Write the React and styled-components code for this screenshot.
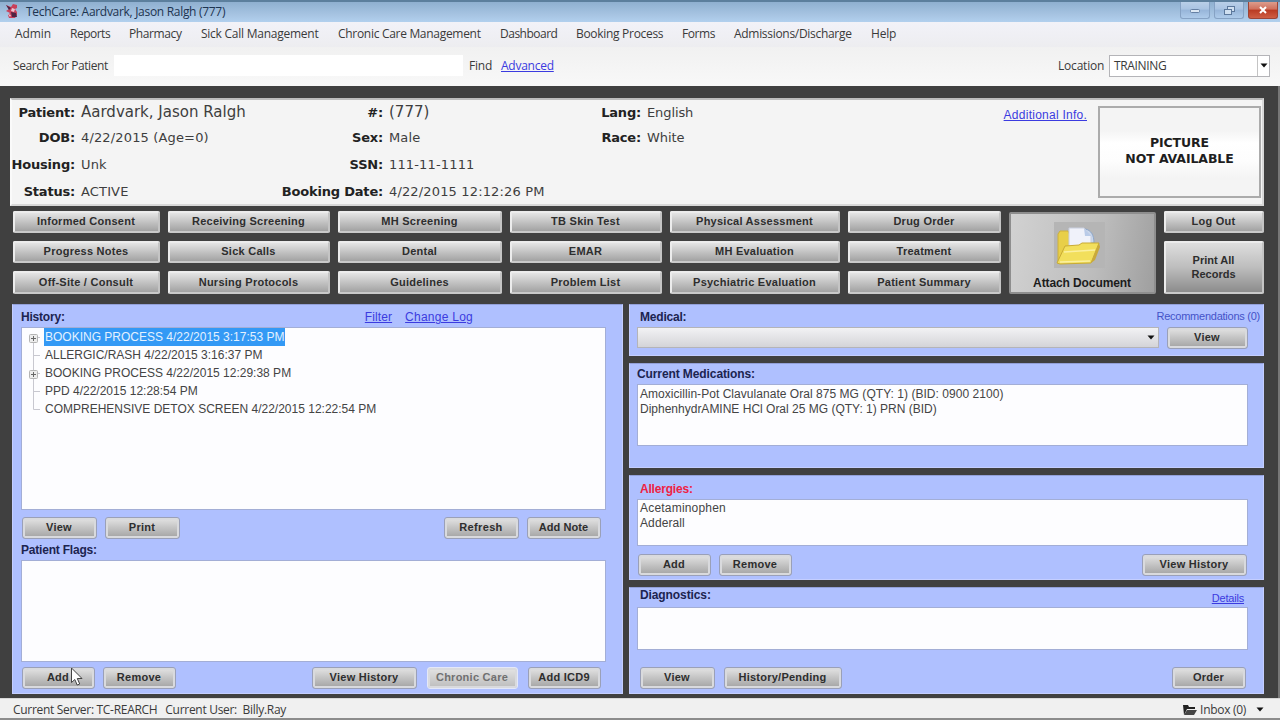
import React from 'react';
import styled, { createGlobalStyle } from 'styled-components';

const GlobalStyle = createGlobalStyle`
    body {
        margin: 0;
        background: #404040;
        overflow: hidden;
    }
    * {
        box-sizing: border-box;
    }
`;

const Window = styled.div`
    width: 1280px;
    height: 720px;
    display: flex;
    flex-direction: column;
    background: #404040;
    font-family: "Liberation Sans", Arial, sans-serif;
    font-size: 12px;
    color: #3a3a3a;
    white-space: nowrap;
`;

const TitleBar = styled.header`
    height: 22px;
    display: flex;
    align-items: center;
    padding: 0 2px 2px 4px;
    border-top: 2px solid #5c7f9d;
    background: linear-gradient(#8fb0d0, #a9c6e4 70%, #b2d0ee);
    font-family: "Open Sans", sans-serif;
`;

const Title = styled.span`
    flex: 1;
    padding-left: 6px;
    font-size: 12px;
    letter-spacing: -0.3px;
    color: #1d3450;
`;

const WindowButtons = styled.div`
    display: flex;
    align-self: flex-start;
    gap: 4px;
`;

const WindowButton = styled.div`
    width: 30px;
    height: 17px;
    display: flex;
    align-items: center;
    justify-content: center;
    border: 1px solid ${({ $close }) => ($close ? '#9c4436' : '#86a2c4')};
    border-top: none;
    border-radius: 0 0 3px 3px;
    background: ${({ $close }) => ($close
        ? 'linear-gradient(#dc9c8c, #cf6f5c 45%, #b93a22 50%, #cf5e44)'
        : 'linear-gradient(#b9cfe8, #a9c3e2 45%, #97b5d9 50%, #aecbea)')};
`;

const MenuBar = styled.nav`
    height: 25px;
    display: grid;
    grid-template-columns: 55px 59px 72px 137px 162px 76px 106px 52px 137px 1fr;
    align-items: center;
    padding: 0 0 2px 15px;
    background: linear-gradient(#f2f2f8, #ededf0);
    font-family: "Open Sans", sans-serif;
    font-size: 12px;
`;

const MenuItem = styled.span`
    letter-spacing: ${({ $spacing }) => $spacing || 0}px;
`;

const SearchRow = styled.div`
    height: 39px;
    display: flex;
    align-items: center;
    padding: 0 10px 2px 13px;
    background: linear-gradient(#f1f1f1, #f8f8f8);
    font-family: "Open Sans", sans-serif;
    letter-spacing: -0.2px;
`;

const SearchLabel = styled.label`
    width: ${({ $width }) => $width}px;
    letter-spacing: ${({ $spacing }) => $spacing || -0.2}px;
`;

const SearchInput = styled.div`
    width: 349px;
    height: 21px;
    margin-right: 6px;
    background: #fff;
`;

const Link = styled.a`
    color: #3b3be0;
    text-decoration: underline;
    font-size: ${({ $size }) => $size || 12}px;
    letter-spacing: ${({ $spacing }) => $spacing || 0}px;
`;

const Spacer = styled.div`
    flex: 1;
`;

const Combo = styled.div`
    width: ${({ $width }) => $width}px;
    height: ${({ $height }) => $height || 22}px;
    display: flex;
    align-items: stretch;
    border: 1px solid #b4b4b8;
    background: ${({ $shaded }) => ($shaded ? 'linear-gradient(#f2f2f4, #d4d4d8)' : '#fff')};
`;

const ComboText = styled.span`
    flex: 1;
    padding-left: 4px;
    line-height: 20px;
    letter-spacing: -0.35px;
`;

const ComboArrow = styled.span`
    width: ${({ $width }) => $width || 12}px;
    display: flex;
    align-items: center;
    justify-content: center;
    border-left: 1px solid ${({ $plain }) => ($plain ? 'transparent' : '#c4c4c4')};
`;

const Workspace = styled.main`
    height: 612px;
    padding: 12px 14px 0 10px;
    border-right: 2px solid #777;
    background: #404040;
`;

const PatientCard = styled.section`
    height: 108px;
    display: flex;
    border: 2px solid #d8d8d8;
    border-top-color: #bdbdbd;
    border-left-color: #fafafa;
    background: #f4f4f4;
    font-family: "DejaVu Sans", Verdana, sans-serif;
    font-size: 13px;
`;

const PatientGrid = styled.div`
    display: grid;
    grid-template-columns: 63px 245px 63px 189px 69px 446px;
    grid-template-rows: 24px 26px 28px 26px;
    align-items: center;
`;

const FieldLabel = styled.b`
    justify-self: end;
    color: #222;
    font-size: 13px;
    letter-spacing: -0.2px;
`;

const FieldValue = styled.span`
    padding-left: 6px;
    font-size: ${({ $large }) => ($large ? 15 : 13)}px;
    letter-spacing: ${({ $large, $spacing }) => ($large ? 0 : $spacing ?? 0.2)}px;
    color: #3e3e3e;
`;

const InfoLink = styled.div`
    grid-column: 6;
    grid-row: 1;
    justify-self: end;
    padding-top: 5px;
    font-family: "Liberation Sans", sans-serif;
`;

const Photo = styled.div`
    width: 163px;
    height: 92px;
    margin: 6px 1px 0 auto;
    padding-bottom: 2px;
    display: flex;
    align-items: center;
    justify-content: center;
    border: 2px solid #ababab;
    background: linear-gradient(#f4f4f4 25%, #fff 40%, #fdfdfd 60%, #f4f4f4 80%);
    color: #1e1e1e;
    font-weight: bold;
    font-size: 12.5px;
    line-height: 16px;
    text-align: center;
    letter-spacing: -0.1px;
`;

const ActionBar = styled.div`
    display: grid;
    grid-template-columns: 147px 162px 164px 152px 170px 153px 147px 100px;
    grid-template-rows: 22px 22px 23px;
    gap: 8px;
    padding: 5px 0 0 3px;
`;

const Button = styled.button`
    width: ${({ $width }) => ($width ? `${$width}px` : 'auto')};
    height: ${({ $width }) => ($width ? '22px' : 'auto')};
    display: flex;
    align-items: center;
    justify-content: center;
    padding: 0 1px 2px 0;
    border: ${({ $width }) => ($width ? '1px solid #9aa0b8' : '2px solid')};
    border-color: ${({ $width }) => ($width ? '#9aa0b8' : '#ececec #c4c4c4 #c9c9c9 #ececec')};
    border-radius: ${({ $width }) => ($width ? 3 : 2)}px;
    background: linear-gradient(#e4e4e4, #c6c6c6 45%, #a2a2a2);
    box-shadow: ${({ $width }) => ($width ? 'inset 0 0 0 2px #d9dadd' : 'none')};
    color: #2e2e2e;
    font: bold 11px "Liberation Sans", Arial, sans-serif;
    letter-spacing: ${({ $spacing }) => $spacing ?? 0.25}px;
    line-height: 14px;
    ${({ $disabled }) => $disabled && `
        color: #707070;
        background: linear-gradient(#e4e4e4, #bcbcbc);
        border-color: #e4e8f8;
    `}
`;

const ActionButton = styled(Button)`
    grid-column: ${({ $col }) => $col};
    grid-row: ${({ $row }) => $row};
`;

const AttachButton = styled(Button)`
    grid-column: 7;
    grid-row: 1 / 4;
    flex-direction: column;
    justify-content: flex-end;
    margin-top: 1px;
    padding-bottom: 1px;
    border-color: #8e8e8e;
    background: linear-gradient(100deg, #d2d2d2, #bcbcbc 60%, #9f9f9f);
    color: #1c1c1c;
    font-size: 12px;
    letter-spacing: -0.1px;
    line-height: 16px;
`;

const PrintAllButton = styled(Button)`
    grid-column: 8;
    grid-row: 2 / 4;
    background: linear-gradient(#dedede, #bdbdbd 50%, #8c8c8c);
    letter-spacing: 0;
`;

const IconTile = styled.span`
    width: 51px;
    height: 46px;
    margin: 0 0 7px -6px;
    background: #b5b5b5;
`;

const Columns = styled.div`
    display: flex;
    align-items: flex-start;
    gap: 6px;
    padding: 10px 0 0 2px;
`;

const RightColumn = styled.div`
    width: 635px;
    display: flex;
    flex-direction: column;
    gap: 7px;
`;

const Panel = styled.section`
    width: ${({ $width }) => ($width ? `${$width}px` : 'auto')};
    height: ${({ $height }) => $height}px;
    padding: ${({ $padding }) => $padding};
    border: 1px solid #c4ceff;
    border-top-color: #93a0d8;
    background: #afc0ff;
`;

const PanelHead = styled.div`
    height: ${({ $height }) => $height}px;
    display: flex;
    align-items: flex-start;
    padding-top: ${({ $top }) => $top || 0}px;
    padding-right: ${({ $right }) => $right || 0}px;
    line-height: 14px;
`;

const PanelTitle = styled.b`
    padding-left: ${({ $indent }) => $indent || 0}px;
    font-size: 12px;
    letter-spacing: ${({ $spacing }) => $spacing ?? -0.2}px;
    color: ${({ $alert }) => ($alert ? '#ee2244' : '#1c2450')};
`;

const HeadLinks = styled.div`
    display: flex;
    gap: 13px;
    margin-left: auto;
    padding-top: ${({ $top }) => $top || 0}px;
`;

const Recommendations = styled.span`
    margin: -1px 0 0 auto;
    color: #4453c8;
    font-size: 11px;
    letter-spacing: -0.25px;
`;

const ListBox = styled.div`
    width: ${({ $width }) => $width}px;
    height: ${({ $height }) => $height}px;
    padding: ${({ $padding }) => $padding || '1px 2px'};
    border: 1px solid #a3aed6;
    background: #fdfdff;
    line-height: 15px;
    color: #444;
`;

const ListItem = styled.div`
    font-size: 12px;
    letter-spacing: ${({ $spacing }) => $spacing || 0}px;
`;

const TreeRow = styled.div`
    height: 18px;
    display: flex;
    align-items: center;
`;

const TreeLabel = styled.span`
    height: 18px;
    padding: 0 1px;
    line-height: 18px;
    background: ${({ $selected }) => ($selected ? '#3399f5' : 'transparent')};
    color: ${({ $selected }) => ($selected ? '#e4f1ff' : '#444')};
`;

const ButtonRow = styled.div`
    display: flex;
    gap: ${({ $gap }) => $gap || 8}px;
    padding: ${({ $padding }) => $padding};
`;

const MedicalRow = styled.div`
    display: flex;
    gap: 8px;
`;

const StatusBar = styled.footer`
    height: 22px;
    display: flex;
    align-items: center;
    gap: 8px;
    padding: 2px 16px 0 13px;
    border-top: 1px solid #d8d8d8;
    border-bottom: 2px solid #8c8c8c;
    background: #f0f0f0;
    font-family: "Open Sans", sans-serif;
    font-size: 12px;
    letter-spacing: -0.3px;
    white-space: pre;
`;

const Inbox = styled.div`
    display: flex;
    align-items: center;
    gap: 3px;
    margin-left: auto;
`;

const InboxLabel = styled.span`
    margin-right: 7px;
`;

const Cursor = styled.svg`
    position: absolute;
    left: 70px;
    top: 667px;
`;

const menuItems = [
    ['Admin', -0.1],
    ['Reports', -0.5],
    ['Pharmacy', -0.4],
    ['Sick Call Management', -0.25],
    ['Chronic Care Management', -0.3],
    ['Dashboard', -0.5],
    ['Booking Process', -0.3],
    ['Forms', -0.4],
    ['Admissions/Discharge', -0.3],
    ['Help', -0.2],
];

const fields = [
    ['Patient:', 'Aardvark, Jason Ralgh', '#:', '(777)', 'Lang:', 'English'],
    ['DOB:', '4/22/2015 (Age=0)', 'Sex:', 'Male', 'Race:', 'White'],
    ['Housing:', 'Unk', 'SSN:', '111-11-1111'],
    ['Status:', 'ACTIVE', 'Booking Date:', '4/22/2015 12:12:26 PM'],
];

const actions = [
    ['Informed Consent', 'Receiving Screening', 'MH Screening', 'TB Skin Test', 'Physical Assessment', 'Drug Order'],
    ['Progress Notes', 'Sick Calls', 'Dental', 'EMAR', 'MH Evaluation', 'Treatment'],
    ['Off-Site / Consult', 'Nursing Protocols', 'Guidelines', 'Problem List', 'Psychiatric Evaluation', 'Patient Summary'],
];

const history = [
    { text: 'BOOKING PROCESS 4/22/2015 3:17:53 PM', node: true, selected: true },
    { text: 'ALLERGIC/RASH 4/22/2015 3:16:37 PM' },
    { text: 'BOOKING PROCESS 4/22/2015 12:29:38 PM', node: true },
    { text: 'PPD 4/22/2015 12:28:54 PM' },
    { text: 'COMPREHENSIVE DETOX SCREEN 4/22/2015 12:22:54 PM' },
];

const Arrow = () => (
    <svg width="8" height="5" viewBox="0 0 8 5"><path d="M0.5 0.5h7L4 4.5z" fill="#111" /></svg>
);

const AppIcon = () => (
    <svg width="16" height="16" viewBox="0 0 16 16">
        <path d="M2 2l5 2 2-3 4 1v3l-2 1 2 3v3l-2 3H5l-1-3 2-2-4-2 3-2z" fill="#c9405a" />
        <path d="M2 2l5 3-2 2zM7 9l5 1 1 4H8z" fill="#4e2444" />
        <path d="M8 5l3 1-1 3-3-1zM4 11l3 1-1 2z" fill="#edc4d2" />
    </svg>
);

const FolderIcon = () => (
    <svg width="51" height="46" viewBox="0 0 51 46">
        <path d="M4 12l2-3h8l2 4v27H4z" fill="#e8cf48" stroke="#cdb03a" />
        <path d="M31 7c6 1 9 6 9 14h-9z" fill="#c9d8ee" stroke="#8ea6c8" />
        <path d="M15 6h15l7 8v13H15z" fill="#f0f2fa" stroke="#c8cede" />
        <path d="M30 6l1 8h6z" fill="#b9cbe8" />
        <path d="M3 41L11 24l14-1 3-2h17l-8 20-31 1z" fill="#f2df5c" stroke="#c9ab34" />
        <path d="M10 30l31-2M6 40l30-1" stroke="#fbf0a0" strokeWidth="1.5" />
        <path d="M45 21l-8 20 4-3 5-13z" fill="#c9a93a" />
    </svg>
);

const TreeMark = ({ node, first, last }) => {
    const line = last ? 'M11.5 0V9.5H18' : `M11.5 ${first ? 9 : 0}V18M11.5 9.5H18`;
    return (
        <svg width="22" height="18" viewBox="0 0 22 18">
            <path d={line} stroke="#c8c8d0" fill="none" />
            {node && <rect x="7.5" y="6.500" width="8" height="8" rx="1" fill="#ececec" stroke="#b4b4b4" />}
            {node && <path d="M9 10.5h5M11.5 8v5" stroke="#666" />}
        </svg>
    );
};

const App = () => {
    return (
        <Window>
            <GlobalStyle />
            <TitleBar>
                <AppIcon />
                <Title>TechCare: Aardvark, Jason Ralgh (777)</Title>
                <WindowButtons>
                    <WindowButton>
                        <svg width="12" height="8"><rect x="1.500" y="3.500" width="9" height="3" rx="1" fill="#dce8f4" stroke="#6580a4" /></svg>
                    </WindowButton>
                    <WindowButton>
                        <svg width="14" height="11">
                            <rect x="5.500" y="1.500" width="7" height="5" fill="#cfdff0" stroke="#5c789c" />
                            <rect x="2.500" y="4.500" width="7" height="5" fill="#cfdff0" stroke="#5c789c" />
                        </svg>
                    </WindowButton>
                    <WindowButton $close>
                        <svg width="12" height="10"><path d="M3 2l6 6M9 2l-6 6" stroke="#fff" strokeWidth="2" /></svg>
                    </WindowButton>
                </WindowButtons>
            </TitleBar>
            <MenuBar>
                {menuItems.map(([name, spacing]) => (
                    <MenuItem key={name} $spacing={spacing}>{name}</MenuItem>
                ))}
            </MenuBar>
            <SearchRow>
                <SearchLabel $width={101} $spacing={-0.4}>Search For Patient</SearchLabel>
                <SearchInput />
                <SearchLabel $width={32}>Find</SearchLabel>
                <Link href="#" $spacing={-0.25}>Advanced</Link>
                <Spacer />
                <SearchLabel $width={51}>Location</SearchLabel>
                <Combo $width={161}>
                    <ComboText>TRAINING</ComboText>
                    <ComboArrow><Arrow /></ComboArrow>
                </Combo>
            </SearchRow>

            <Workspace>
                <PatientCard>
                    <PatientGrid>
                        {fields.map((row, r) => row.map((text, c) => (
                            c % 2 === 0
                                ? <FieldLabel key={text} style={{ gridRow: r + 1, gridColumn: c + 1 }}>{text}</FieldLabel>
                                : (
                                    <FieldValue
                                        key={text}
                                        $large={r === 0 && c < 5}
                                        $spacing={c === 5 ? -0.1 : 0.15}
                                        style={{ gridRow: r + 1, gridColumn: c + 1 }}
                                    >
                                        {text}
                                    </FieldValue>
                                )
                        )))}
                        <InfoLink><Link href="#" $spacing={0.25}>Additional Info.</Link></InfoLink>
                    </PatientGrid>
                    <Photo>PICTURE<br />NOT AVAILABLE</Photo>
                </PatientCard>

                <ActionBar>
                    {actions.map((row, r) => row.map((name, c) => (
                        <ActionButton key={name} $row={r + 1} $col={c + 1}>{name}</ActionButton>
                    )))}
                    <AttachButton>
                        <IconTile><FolderIcon /></IconTile>
                        Attach Document
                    </AttachButton>
                    <ActionButton $row={1} $col={8}>Log Out</ActionButton>
                    <PrintAllButton>Print All<br />Records</PrintAllButton>
                </ActionBar>

                <Columns>
                    <Panel $width={611} $height={390} $padding="5px 8px 0">
                        <PanelHead $height={17} $right={141}>
                            <PanelTitle>History:</PanelTitle>
                            <HeadLinks>
                                <Link href="#" $spacing={0.1}>Filter</Link>
                                <Link href="#" $spacing={0.25}>Change Log</Link>
                            </HeadLinks>
                        </PanelHead>
                        <ListBox $width={585} $height={183} $padding="0">
                            {history.map((item, i) => (
                                <TreeRow key={item.text}>
                                    <TreeMark node={item.node} first={i === 0} last={i === history.length - 1} />
                                    <TreeLabel $selected={item.selected}>{item.text}</TreeLabel>
                                </TreeRow>
                            ))}
                        </ListBox>
                        <ButtonRow $padding="7px 13px 0 1px">
                            <Button $width={75}>View</Button>
                            <Button $width={75}>Print</Button>
                            <Spacer />
                            <Button $width={75} $spacing={0.35}>Refresh</Button>
                            <Button $width={74} $spacing={0.1}>Add Note</Button>
                        </ButtonRow>
                        <PanelHead $height={21} $top={4}>
                            <PanelTitle>Patient Flags:</PanelTitle>
                        </PanelHead>
                        <ListBox $width={585} $height={102} />
                        <ButtonRow $padding="5px 13px 0 1px">
                            <Button $width={73}>Add</Button>
                            <Button $width={73}>Remove</Button>
                            <Spacer />
                            <ButtonRow $gap={10}>
                                <Button $width={105}>View History</Button>
                                <Button $width={91} $disabled>Chronic Care</Button>
                                <Button $width={73}>Add ICD9</Button>
                            </ButtonRow>
                        </ButtonRow>
                    </Panel>

                    <RightColumn>
                        <Panel $height={52} $padding="5px 0 0 7px">
                            <PanelHead $height={17} $right={3}>
                                <PanelTitle $indent={3}>Medical:</PanelTitle>
                                <Recommendations>Recommendations (0)</Recommendations>
                            </PanelHead>
                            <MedicalRow>
                                <Combo $width={522} $height={21} $shaded>
                                    <ComboText />
                                    <ComboArrow $width={16} $plain><Arrow /></ComboArrow>
                                </Combo>
                                <Button $width={81}>View</Button>
                            </MedicalRow>
                        </Panel>
                        <Panel $height={105} $padding="3px 0 0 7px">
                            <PanelHead $height={17}>
                                <PanelTitle $spacing={-0.1}>Current Medications:</PanelTitle>
                            </PanelHead>
                            <ListBox $width={611} $height={62} $padding="2px">
                                <ListItem $spacing={0.04}>Amoxicillin-Pot Clavulanate Oral 875 MG (QTY: 1) (BID: 0900 2100)</ListItem>
                                <ListItem>DiphenhydrAMINE HCl Oral 25 MG (QTY: 1) PRN (BID)</ListItem>
                            </ListBox>
                        </Panel>
                        <Panel $height={105} $padding="6px 16px 0 7px">
                            <PanelHead $height={17}>
                                <PanelTitle $indent={3} $alert>Allergies:</PanelTitle>
                            </PanelHead>
                            <ListBox $width={611} $height={47}>
                                <ListItem $spacing={0.2}>Acetaminophen</ListItem>
                                <ListItem $spacing={0.1}>Adderall</ListItem>
                            </ListBox>
                            <ButtonRow $padding="8px 0 0 1px">
                                <Button $width={73}>Add</Button>
                                <Button $width={73}>Remove</Button>
                                <Spacer />
                                <Button $width={105}>View History</Button>
                            </ButtonRow>
                        </Panel>
                        <Panel $height={107} $padding="0 16px 0 7px">
                            <PanelHead $height={19} $right={3}>
                                <PanelTitle $indent={3} $spacing={-0.1}>Diagnostics:</PanelTitle>
                                <HeadLinks $top={3}><Link href="#" $size={11} $spacing={-0.2}>Details</Link></HeadLinks>
                            </PanelHead>
                            <ListBox $width={611} $height={43} />
                            <ButtonRow $gap={9} $padding="17px 1px 0 3px">
                                <Button $width={75}>View</Button>
                                <Button $width={118}>History/Pending</Button>
                                <Spacer />
                                <Button $width={74}>Order</Button>
                            </ButtonRow>
                        </Panel>
                    </RightColumn>
                </Columns>
            </Workspace>

            <StatusBar>
                <span>Current Server: TC-REARCH</span>
                <span>{'Current User:  Billy.Ray'}</span>
                <Inbox>
                    <svg width="14" height="12" viewBox="0 0 14 12">
                        <path d="M0 1h5l1 2h6v2H4L1 11z" fill="#222" />
                        <path d="M4 6h10l-3 5H1z" fill="#444" />
                    </svg>
                    <InboxLabel>Inbox (0)</InboxLabel>
                    <Arrow />
                </Inbox>
            </StatusBar>
            <Cursor width="14" height="20" viewBox="0 0 14 20">
                <path d="M1.500 1v14.500l3.300-3 2.400 5.500 2.500-1-2.400-5.500h4.700z" fill="#fff" stroke="#444" />
            </Cursor>
        </Window>
    );
};

export default App;
